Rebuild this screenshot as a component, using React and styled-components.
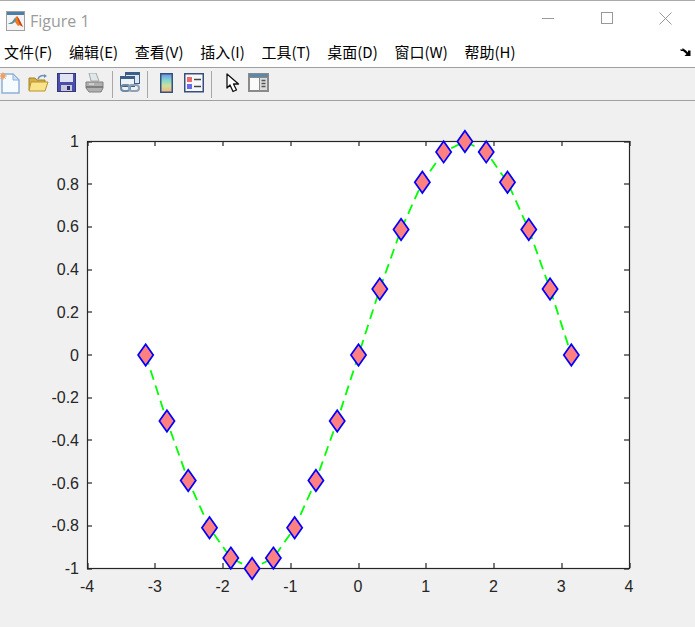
import React from 'react';
import styled, { createGlobalStyle } from 'styled-components';

const GlobalStyle = createGlobalStyle`
  html, body {
    margin: 0;
    padding: 0;
    background: #f0f0f0;
  }
`;

const MENUS = ['文件(F)', '编辑(E)', '查看(V)', '插入(I)', '工具(T)', '桌面(D)', '窗口(W)', '帮助(H)'];

const AXES = { left: 87, right: 629, top: 141, bottom: 568 };
const X_TICKS = [-4, -3, -2, -1, 0, 1, 2, 3, 4];
const Y_TICKS = [-1, -0.8, -0.6, -0.4, -0.2, 0, 0.2, 0.4, 0.6, 0.8, 1];

const sx = (v) => AXES.left + 0.5 + ((v + 4) / 8) * (AXES.right - AXES.left);
const sy = (v) => AXES.bottom + 0.5 - ((v + 1) / 2) * (AXES.bottom - AXES.top);

const POINTS = Array.from({ length: 21 }, (_, i) => {
  const x = -Math.PI + (i * Math.PI) / 10;
  return [sx(x), sy(Math.sin(x))];
});

function MatlabLogo() {
  return (
    <svg width="19" height="20" viewBox="0 0 19 20">
      <rect x="0.5" y="0.5" width="18" height="19" fill="#f4f4f4" stroke="#a0a0a0" />
      <rect x="1" y="1" width="17" height="3" fill="#4a7fa8" />
      <path d="M2 13l4-2 3-4 2-2 2 3 4 8-3-2-2 1-3-4-3 2z" fill="#f07a1e" />
      <path d="M2 13l4-2 3-4 1 2-3 3-2 1z" fill="#2f9ad0" />
      <path d="M11 5l2 3 4 8-3-2-2-5z" fill="#c9401a" />
    </svg>
  );
}

function CornerArrow() {
  return (
    <svg width="11" height="8" viewBox="0 0 11 8">
      <path d="M0 1.500h2.500V0L6 2.500 8 4.500V2.500L10.500 2.500V8H4.500L6.500 6 3 3H1z" fill="#000" />
    </svg>
  );
}

function NewIcon() {
  return (
    <svg width="20" height="22" viewBox="0 0 20 22">
      <path d="M2 2H13L19 8V21H2z" fill="#f6fbff" stroke="#8fb0d6" strokeWidth="1.500" />
      <path d="M13 2V8H19z" fill="#cfe0f4" stroke="#8fb0d6" />
      <circle cx="3" cy="4" r="2.500" fill="#f5a05a" />
      <path d="M3 0v8M-1 4h8M0 1l6 6M6 1L0 7" stroke="#e9a070" strokeWidth="0.700" />
    </svg>
  );
}

function OpenIcon() {
  return (
    <svg width="21" height="19" viewBox="0 0 21 19">
      <path d="M1 5h6l2 2h8v10H1z" fill="#d9ad45" stroke="#a58428" />
      <path d="M1 18l2-9h17l-3 9z" fill="#fbe38a" stroke="#b8962f" />
      <path d="M10 6c1-3 4-4 7-3" fill="none" stroke="#6f8fb0" strokeWidth="1.500" />
      <path d="M16 1l3 2-3 2z" fill="#6f8fb0" />
    </svg>
  );
}

function SaveIcon() {
  return (
    <svg width="20" height="19" viewBox="0 0 20 19">
      <rect x="0.500" y="0.500" width="18" height="18" fill="#4a4fae" stroke="#34377f" />
      <rect x="3" y="1" width="13" height="8" fill="#dfe3f2" />
      <rect x="4" y="12" width="11" height="6" fill="#c9cad4" />
      <rect x="10" y="13" width="3" height="4" fill="#2c2f70" />
    </svg>
  );
}

function PrintIcon() {
  return (
    <svg width="19" height="20" viewBox="0 0 19 20">
      <path d="M4 0h7l3 8H6z" fill="#dfe7ea" stroke="#a0a8ac" />
      <path d="M1 9h17v6l-2 4H4l-3-4z" fill="#b0b0b0" stroke="#808080" />
      <path d="M1 14h17" stroke="#6f6f6f" strokeWidth="1.500" />
      <path d="M4 11h5" stroke="#ececec" />
    </svg>
  );
}

function LinkIcon() {
  return (
    <svg width="20" height="21" viewBox="0 0 20 21">
      <rect x="5.500" y="0.500" width="14" height="11" fill="#dfe8f2" stroke="#3d5f86" />
      <rect x="5.500" y="0.500" width="14" height="2.500" fill="#3d5f86" />
      <rect x="0.500" y="4.500" width="14" height="10" fill="#eef3f8" stroke="#3d5f86" />
      <rect x="0.500" y="4.500" width="14" height="2.500" fill="#3d5f86" />
      <rect x="1" y="13" width="9" height="6" rx="3" fill="none" stroke="#6f8aa6" strokeWidth="2" />
      <rect x="9" y="13" width="10" height="6" rx="3" fill="none" stroke="#8ba2ba" strokeWidth="2" />
    </svg>
  );
}

function ColorbarIcon() {
  return (
    <svg width="13" height="20" viewBox="0 0 13 20">
      <defs>
        <linearGradient id="cbar" x1="0" y1="0" x2="0" y2="1">
          <stop offset="0" stopColor="#6f8fe8" />
          <stop offset="0.350" stopColor="#80d8d0" />
          <stop offset="0.650" stopColor="#d0e098" />
          <stop offset="1" stopColor="#f4b088" />
        </linearGradient>
      </defs>
      <rect x="0.750" y="0.750" width="11.500" height="18.500" fill="url(#cbar)" stroke="#35507c" strokeWidth="1.500" />
    </svg>
  );
}

function LegendIcon() {
  return (
    <svg width="20" height="20" viewBox="0 0 20 20">
      <rect x="0.750" y="0.750" width="18.500" height="18" fill="#f6f8fb" stroke="#35507c" strokeWidth="1.500" />
      <rect x="3" y="4" width="5" height="5" fill="#ee6a6a" />
      <rect x="3" y="11" width="5" height="5" fill="#6a6aee" />
      <path d="M10 6.500h7M10 13.500h7" stroke="#444" strokeWidth="1.500" />
    </svg>
  );
}

function CursorIcon() {
  return (
    <svg width="14" height="20" viewBox="0 0 14 20">
      <path d="M1 1v14l3-3 3 6.500 3.500-1.500-3-6h5z" fill="#fff" stroke="#111" strokeWidth="1.300" strokeLinejoin="round" />
    </svg>
  );
}

function PanelIcon() {
  return (
    <svg width="21" height="19" viewBox="0 0 21 19">
      <rect x="0.500" y="0.500" width="20" height="18" fill="#8a8a8a" stroke="#8a8a8a" />
      <rect x="1" y="1" width="19" height="3" fill="#5f87a6" />
      <rect x="2" y="5" width="9" height="12" fill="#fafafa" />
      <rect x="12" y="5" width="7" height="12" fill="#dcdcdc" />
      <path d="M13.500 7.500h4M13.500 10.500h4M13.500 13.500h4" stroke="#555" strokeWidth="1.500" />
    </svg>
  );
}

export default function App() {
  const linePath = POINTS.map(([x, y]) => `${x},${y}`).join(' ');

  return (
    <Window>
      <GlobalStyle />
      <TitleBar>
        <LogoSlot>
          <MatlabLogo />
        </LogoSlot>
        <Title>Figure 1</Title>
        <WindowControls>
          <ControlSlot>
            <svg width="12" height="1" viewBox="0 0 12 1">
              <path d="M0 0.500h12" stroke="#999" />
            </svg>
          </ControlSlot>
          <ControlSlot>
            <svg width="12" height="12" viewBox="0 0 12 12">
              <rect x="0.500" y="0.500" width="11" height="11" fill="none" stroke="#999" />
            </svg>
          </ControlSlot>
          <ControlSlot>
            <svg width="13" height="13" viewBox="0 0 13 13">
              <path d="M0.500 0.500l12 12M12.500 0.500l-12 12" stroke="#999" />
            </svg>
          </ControlSlot>
        </WindowControls>
      </TitleBar>

      <MenuBar>
        <MenuList>
          {MENUS.map((m) => (
            <MenuItem key={m}>{m}</MenuItem>
          ))}
        </MenuList>
        <CornerArrow />
      </MenuBar>

      <ToolBar>
        <ToolGroup $gap={8} $left={0} $right={8}>
          <NewIcon />
          <OpenIcon />
          <SaveIcon />
          <PrintIcon />
        </ToolGroup>
        <Separator />
        <ToolGroup $gap={0} $left={7} $right={7}>
          <LinkIcon />
        </ToolGroup>
        <Separator />
        <ToolGroup $gap={11} $left={12} $right={7}>
          <ColorbarIcon />
          <LegendIcon />
        </ToolGroup>
        <Separator />
        <ToolGroup $gap={8} $left={14} $right={0}>
          <CursorIcon />
          <PanelIcon />
        </ToolGroup>
      </ToolBar>

      <Plot viewBox="0 101 695 526" width="695" height="526">
        <rect x={AXES.left} y={AXES.top} width={AXES.right - AXES.left} height={AXES.bottom - AXES.top} fill="#fff" />

        <polyline points={linePath} fill="none" stroke="#00ff00" strokeWidth="1.800" strokeDasharray="10 6" />

        <g stroke="#262626" strokeWidth="1.200" fill="none">
          <rect x={AXES.left + 0.5} y={AXES.top + 0.5} width={AXES.right - AXES.left} height={AXES.bottom - AXES.top} />
          {X_TICKS.map((t) => (
            <React.Fragment key={t}>
              <path d={`M${Math.round(sx(t))} ${AXES.bottom}v-5`} />
              <path d={`M${Math.round(sx(t))} ${AXES.top}v5`} />
            </React.Fragment>
          ))}
          {Y_TICKS.map((t) => (
            <React.Fragment key={t}>
              <path d={`M${AXES.left} ${Math.round(sy(t))}h5`} />
              <path d={`M${AXES.right} ${Math.round(sy(t))}h-5`} />
            </React.Fragment>
          ))}
        </g>

        {POINTS.map(([x, y]) => (
          <polygon
            key={x}
            points={`${x},${y - 10.7} ${x + 7.6},${y} ${x},${y + 10.7} ${x - 7.6},${y}`}
            fill="#ff8080"
            stroke="#0000ff"
            strokeWidth="1.700"
          />
        ))}

        {X_TICKS.map((t) => (
          <TickLabel key={t} x={sx(t) - 0.5} y={592} textAnchor="middle">
            {t}
          </TickLabel>
        ))}
        {Y_TICKS.map((t) => (
          <TickLabel key={t} x={79} y={sy(t) + 5.5} textAnchor="end">
            {t}
          </TickLabel>
        ))}
      </Plot>
    </Window>
  );
}

const Window = styled.div`
  width: 695px;
  height: 627px;
  overflow: hidden;
  background: #f0f0f0;
  display: flex;
  flex-direction: column;
`;

const TitleBar = styled.div`
  height: 39px;
  background: #fff;
  border-top: 1px solid #aaa;
  display: flex;
  align-items: center;
  padding-left: 6px;
`;

const LogoSlot = styled.div`
  width: 24px;
  height: 20px;
  display: flex;
  align-items: center;
`;

const Title = styled.div`
  font-family: 'Open Sans', 'Noto Sans', sans-serif;
  font-size: 16px;
  color: #9b9b9b;
`;

const WindowControls = styled.div`
  margin-left: auto;
  display: flex;
  height: 100%;
`;

const ControlSlot = styled.div`
  width: 59px;
  display: flex;
  align-items: center;
  justify-content: center;
  padding-bottom: 5px;
  box-sizing: border-box;
`;

const MenuBar = styled.div`
  height: 24px;
  background: #fff;
  border-bottom: 1px solid #a0a0a0;
  display: flex;
  align-items: center;
  justify-content: space-between;
  padding: 0 4px 3px;
`;

const MenuList = styled.div`
  display: flex;
  gap: 16.7px;
`;

const MenuItem = styled.span`
  font-family: 'Noto Sans CJK SC', 'Noto Sans', sans-serif;
  font-size: 15px;
  line-height: 20px;
  color: #000;
`;

const ToolBar = styled.div`
  height: 32px;
  background: #f0f0f0;
  border-bottom: 1px solid #a0a0a0;
  display: flex;
  align-items: center;
`;

const ToolGroup = styled.div`
  display: flex;
  align-items: center;
  margin-bottom: 3px;
  gap: ${({ $gap }) => $gap}px;
  padding: 0 ${({ $right }) => $right}px 0 ${({ $left }) => $left}px;
`;

const Separator = styled.div`
  width: 1px;
  height: 27px;
  background: #a8a8a8;
`;

const Plot = styled.svg`
  display: block;
  background: #f0f0f0;
`;

const TickLabel = styled.text`
  font-family: 'Liberation Sans', Arial, sans-serif;
  font-size: 16px;
  fill: #262626;
`;
